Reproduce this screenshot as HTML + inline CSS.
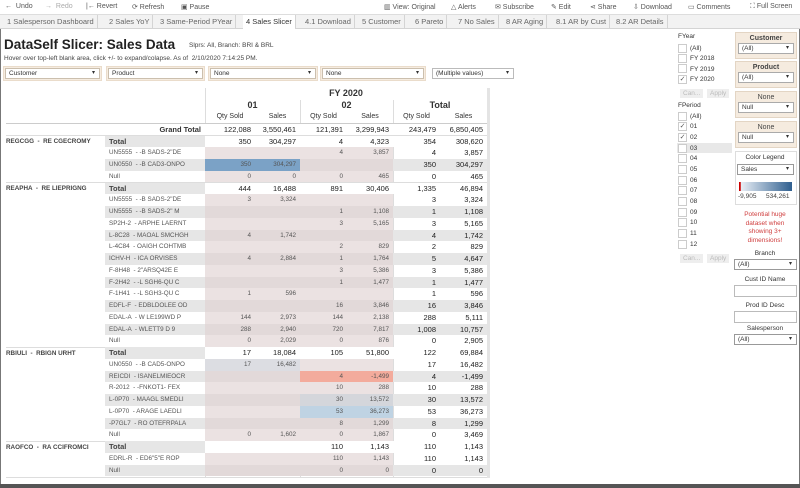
<!DOCTYPE html>
<html><head><meta charset="utf-8"><style>
*{box-sizing:border-box;margin:0;padding:0}
body{width:800px;height:488px;overflow:hidden;background:#fff;font-family:"Liberation Sans",sans-serif;color:#333;position:relative}
.abs{position:absolute}
.tb{position:absolute;top:0;left:0;width:800px;height:15px;background:#fff;font-size:7px;color:#555;border-bottom:1px solid #ddd}
.tb span{position:absolute;top:3px}
.tabs{position:absolute;top:15px;left:0;width:800px;height:14px;background:#f2f2f2;border-bottom:1px solid #d4d4d4;font-size:7.5px;color:#666}
.tabs span{position:absolute;top:0;height:14px;line-height:14px;padding:0 3px;border-right:1px solid #d4d4d4}
.tabs .on{background:#fff;color:#333}
.dd{position:absolute;height:11px;border:1px solid #cbbfae;background:#fff;font-size:6.5px;line-height:9px;padding-left:3px;color:#333}
.dd:after{content:"▾";position:absolute;right:4px;top:0;font-size:6px}
.ddw{position:absolute;height:15px;background:#f6ece0;border:1px solid #eadccb}
.r{position:absolute;left:0;width:487px;height:11.75px;font-size:6.3px;color:#555}
.r span{position:absolute;top:0;height:11.75px;line-height:11.75px;text-align:right;padding-right:4px}
.r .l{left:105px;width:100px;text-align:left;padding-left:4px}
.r .a{left:205px;width:50px}.r .b{left:255px;width:45px}
.r .c{left:300px;width:47px}.r .d{left:347px;width:46px}
.r .e{left:393px;width:47px;font-size:7.5px;color:#222}.r .f{left:440px;width:47px;font-size:7.5px;color:#222}
.r .a,.r .b,.r .c,.r .d{background:#ebe2e2}
.r.g .l,.r.g .e,.r.g .f{background:#e6e6e6}
.r.g .a,.r.g .b,.r.g .c,.r.g .d{background:#e2d9d9}
.r.t .l{background:#e6e6e6;font-weight:bold;color:#444}
.r.t span{font-size:7.5px;color:#222}
.r.t .a,.r.t .b,.r.t .c,.r.t .d,.r.t .e,.r.t .f{background:#fff}
.grp{position:absolute;left:6px;font-size:6.3px;color:#444;font-weight:bold}
.hl{position:absolute;left:6px;width:481px;height:1px;background:#ddd}
.vl{position:absolute;width:1px;background:#ddd}
.cb{position:absolute;left:678px;width:9px;height:9px;border:1px solid #ccc;background:#fff}
.ck{font-size:7px;line-height:7px;text-align:center;color:#555}
.ft{position:absolute;left:690px;font-size:6.5px;color:#333}
.card{position:absolute;left:735px;width:62px;background:#f5ebdf;border:1px solid #e3d5c4}
.card .h{font-size:7px;font-weight:bold;text-align:center;color:#444;margin-top:2px}
.card .dd{position:relative;margin:1px 2px;width:56px;border-color:#aaa;font-size:6.5px}
.lab{position:absolute;font-size:6.5px;color:#333;text-align:center;width:64px;left:733px}
.btn{position:absolute;font-size:6.5px;color:#bbb;background:#eee;padding:1px 3px}
</style></head><body>
<div class="tb">
<span style="left:5px">←&nbsp; Undo</span><span style="left:45px;color:#aaa">→&nbsp; Redo</span><span style="left:86px">|← Revert</span><span style="left:132px">⟳ Refresh</span><span style="left:181px">▣ Pause</span>
<span style="left:384px">▥ View: Original</span><span style="left:451px">△ Alerts</span><span style="left:495px">✉ Subscribe</span><span style="left:551px">✎ Edit</span><span style="left:590px">⋖ Share</span><span style="left:633px">⇩ Download</span><span style="left:688px">▭ Comments</span><span style="left:750px">⛶ Full Screen</span>
</div>
<div class="tabs">
<span style="left:4px">1 Salesperson Dashboard</span><span style="left:106px">2 Sales YoY</span><span style="left:157px">3 Same-Period PYear</span><span class="on" style="left:243px">4 Sales Slicer</span><span style="left:302px">4.1 Download</span><span style="left:359px">5 Customer</span><span style="left:412px">6 Pareto</span><span style="left:455px">7 No Sales</span><span style="left:503px">8 AR Aging</span><span style="left:553px">8.1 AR by Cust</span><span style="left:613px">8.2 AR Details</span>
</div>
<div class="abs" style="left:4px;top:37px;font-size:13.5px;font-weight:bold;color:#222">DataSelf Slicer: Sales Data</div>
<div class="abs" style="left:189px;top:42px;font-size:6.5px;color:#444">Slprs: All, Branch: BRI &amp; BRL</div>
<div class="abs" style="left:4px;top:55px;font-size:6.5px;color:#444">Hover over top-left blank area, click +/- to expand/colapse. As of &nbsp;2/10/2020 7:14:25 PM.</div>
<div class="ddw" style="left:3px;top:66px;width:99px"></div><div class="dd" style="left:5px;top:68px;width:95px">Customer</div>
<div class="ddw" style="left:106px;top:66px;width:99px"></div><div class="dd" style="left:108px;top:68px;width:95px">Product</div>
<div class="ddw" style="left:208px;top:66px;width:110px"></div><div class="dd" style="left:210px;top:68px;width:106px">None</div>
<div class="ddw" style="left:320px;top:66px;width:106px"></div><div class="dd" style="left:322px;top:68px;width:102px">None</div>
<div class="dd" style="left:432px;top:68px;width:82px;border-color:#bbb">(Multiple values)</div>

<div class="vl" style="left:205px;top:88px;height:390px"></div>
<div class="vl" style="left:300px;top:100px;height:378px"></div>
<div class="vl" style="left:393px;top:100px;height:378px"></div>
<div class="abs" style="left:487px;top:88px;width:3px;height:390px;background:#e4e4e4"></div>
<div class="abs" style="left:205px;top:88px;width:282px;text-align:center;font-size:9px;font-weight:bold;color:#333">FY 2020</div>
<div class="abs" style="left:205px;top:100px;width:95px;text-align:center;font-size:9px;font-weight:bold">01</div>
<div class="abs" style="left:300px;top:100px;width:93px;text-align:center;font-size:9px;font-weight:bold">02</div>
<div class="abs" style="left:393px;top:100px;width:94px;text-align:center;font-size:9px;font-weight:bold">Total</div>
<div class="abs" style="left:205px;top:113px;width:50px;text-align:center;font-size:7px">Qty Sold</div>
<div class="abs" style="left:255px;top:113px;width:45px;text-align:center;font-size:7px">Sales</div>
<div class="abs" style="left:300px;top:113px;width:47px;text-align:center;font-size:7px">Qty Sold</div>
<div class="abs" style="left:347px;top:113px;width:46px;text-align:center;font-size:7px">Sales</div>
<div class="abs" style="left:393px;top:113px;width:47px;text-align:center;font-size:7px">Qty Sold</div>
<div class="abs" style="left:440px;top:113px;width:47px;text-align:center;font-size:7px">Sales</div>
<div class="hl" style="top:123px;background:#ccc"></div>
<div class="r t" style="top:123.5px"><span style="left:105px;width:100px;font-weight:bold;color:#333">Grand Total</span><span class="a">122,088</span><span class="b">3,550,461</span><span class="c">121,391</span><span class="d">3,299,943</span><span class="e">243,479</span><span class="f">6,850,405</span></div>

<div class="hl" style="top:135px"></div>
<div class="grp" style="top:138px">REGCGG &nbsp;- &nbsp;RE CGECROMY</div>
<div class="r t" style="top:135.5px"><span class="l">Total</span><span class="a">350</span><span class="b">304,297</span><span class="c">4</span><span class="d">4,323</span><span class="e">354</span><span class="f">308,620</span></div>
<div class="r" style="top:147.25px"><span class="l">UN5555 &nbsp;- -B SADS-2"DE</span><span class="a"></span><span class="b"></span><span class="c">4</span><span class="d">3,857</span><span class="e">4</span><span class="f">3,857</span></div>
<div class="r g" style="top:159px"><span class="l">UN0550 &nbsp;- -B CAD3-ONPO</span><span class="a" style="background:#7ba2c6">350</span><span class="b" style="background:#7ba2c6">304,297</span><span class="c"></span><span class="d"></span><span class="e">350</span><span class="f">304,297</span></div>
<div class="r" style="top:170.75px"><span class="l">Null</span><span class="a">0</span><span class="b">0</span><span class="c">0</span><span class="d">465</span><span class="e">0</span><span class="f">465</span></div>

<div class="hl" style="top:182px"></div>
<div class="grp" style="top:185px">REAPHA &nbsp;- &nbsp;RE LIEPRIGNG</div>
<div class="r t" style="top:182.5px"><span class="l">Total</span><span class="a">444</span><span class="b">16,488</span><span class="c">891</span><span class="d">30,406</span><span class="e">1,335</span><span class="f">46,894</span></div>
<div class="r" style="top:194.25px"><span class="l">UN5555 &nbsp;- -B SADS-2"DE</span><span class="a">3</span><span class="b">3,324</span><span class="c"></span><span class="d"></span><span class="e">3</span><span class="f">3,324</span></div>
<div class="r g" style="top:206px"><span class="l">UN5555 &nbsp;- -B SADS-2" M</span><span class="a"></span><span class="b"></span><span class="c">1</span><span class="d">1,108</span><span class="e">1</span><span class="f">1,108</span></div>
<div class="r" style="top:217.75px"><span class="l">SP2H-2 &nbsp;- ARPHE LAERNT</span><span class="a"></span><span class="b"></span><span class="c">3</span><span class="d">5,165</span><span class="e">3</span><span class="f">5,165</span></div>
<div class="r g" style="top:229.5px"><span class="l">L-8C28 &nbsp;- MAOAL SMCHGH</span><span class="a">4</span><span class="b">1,742</span><span class="c"></span><span class="d"></span><span class="e">4</span><span class="f">1,742</span></div>
<div class="r" style="top:241.25px"><span class="l">L-4C84 &nbsp;- OAIGH COHTMB</span><span class="a"></span><span class="b"></span><span class="c">2</span><span class="d">829</span><span class="e">2</span><span class="f">829</span></div>
<div class="r g" style="top:253px"><span class="l">ICHV-H &nbsp;- ICA ORVISES</span><span class="a">4</span><span class="b">2,884</span><span class="c">1</span><span class="d">1,764</span><span class="e">5</span><span class="f">4,647</span></div>
<div class="r" style="top:264.75px"><span class="l">F-8H48 &nbsp;- 2"ARSQ42E E</span><span class="a"></span><span class="b"></span><span class="c">3</span><span class="d">5,386</span><span class="e">3</span><span class="f">5,386</span></div>
<div class="r g" style="top:276.5px"><span class="l">F-2H42 &nbsp;- -L SGH6-QU C</span><span class="a"></span><span class="b"></span><span class="c">1</span><span class="d">1,477</span><span class="e">1</span><span class="f">1,477</span></div>
<div class="r" style="top:288.25px"><span class="l">F-1H41 &nbsp;- -L SGH3-QU C</span><span class="a">1</span><span class="b">596</span><span class="c"></span><span class="d"></span><span class="e">1</span><span class="f">596</span></div>
<div class="r g" style="top:300px"><span class="l">EDFL-F &nbsp;- EDBLDOLEE OD</span><span class="a"></span><span class="b"></span><span class="c">16</span><span class="d">3,846</span><span class="e">16</span><span class="f">3,846</span></div>
<div class="r" style="top:311.75px"><span class="l">EDAL-A &nbsp;- W LE199WD P</span><span class="a">144</span><span class="b">2,973</span><span class="c">144</span><span class="d">2,138</span><span class="e">288</span><span class="f">5,111</span></div>
<div class="r g" style="top:323.5px"><span class="l">EDAL-A &nbsp;- WLETT9 D 9</span><span class="a">288</span><span class="b">2,940</span><span class="c">720</span><span class="d">7,817</span><span class="e">1,008</span><span class="f">10,757</span></div>
<div class="r" style="top:335.25px"><span class="l">Null</span><span class="a">0</span><span class="b">2,029</span><span class="c">0</span><span class="d">876</span><span class="e">0</span><span class="f">2,905</span></div>

<div class="hl" style="top:346.5px"></div>
<div class="grp" style="top:349.5px">RBIULI &nbsp;- &nbsp;RBIGN URHT</div>
<div class="r t" style="top:347px"><span class="l">Total</span><span class="a">17</span><span class="b">18,084</span><span class="c">105</span><span class="d">51,800</span><span class="e">122</span><span class="f">69,884</span></div>
<div class="r" style="top:358.75px"><span class="l">UN0550 &nbsp;- -B CAD5-ONPO</span><span class="a" style="background:#dcdde2">17</span><span class="b" style="background:#dcdde2">16,482</span><span class="c"></span><span class="d"></span><span class="e">17</span><span class="f">16,482</span></div>
<div class="r g" style="top:370.5px"><span class="l">REICDI &nbsp;- ISANELMIEOCR</span><span class="a"></span><span class="b"></span><span class="c" style="background:#f3ab9c">4</span><span class="d" style="background:#f3ab9c">-1,499</span><span class="e">4</span><span class="f">-1,499</span></div>
<div class="r" style="top:382.25px"><span class="l">R-2012 &nbsp;- -FNKOT1- FEX</span><span class="a"></span><span class="b"></span><span class="c">10</span><span class="d">288</span><span class="e">10</span><span class="f">288</span></div>
<div class="r g" style="top:394px"><span class="l">L-0P70 &nbsp;- MAAGL SMEDLI</span><span class="a"></span><span class="b"></span><span class="c" style="background:#d4d6db">30</span><span class="d" style="background:#d4d6db">13,572</span><span class="e">30</span><span class="f">13,572</span></div>
<div class="r" style="top:405.75px"><span class="l">L-0P70 &nbsp;- ARAGE LAEDLI</span><span class="a"></span><span class="b"></span><span class="c" style="background:#bfd3e3">53</span><span class="d" style="background:#bfd3e3">36,273</span><span class="e">53</span><span class="f">36,273</span></div>
<div class="r g" style="top:417.5px"><span class="l">-P7GL7 &nbsp;- RO OTEFRPALA</span><span class="a"></span><span class="b"></span><span class="c">8</span><span class="d">1,299</span><span class="e">8</span><span class="f">1,299</span></div>
<div class="r" style="top:429.25px"><span class="l">Null</span><span class="a">0</span><span class="b">1,602</span><span class="c">0</span><span class="d">1,867</span><span class="e">0</span><span class="f">3,469</span></div>

<div class="hl" style="top:440.5px"></div>
<div class="grp" style="top:443.5px">RAOFCO &nbsp;- &nbsp;RA CCIFROMCI</div>
<div class="r t" style="top:441px"><span class="l">Total</span><span class="a"></span><span class="b"></span><span class="c">110</span><span class="d">1,143</span><span class="e">110</span><span class="f">1,143</span></div>
<div class="r" style="top:452.75px"><span class="l">EDRL-R &nbsp;- ED6"5"E ROP</span><span class="a"></span><span class="b"></span><span class="c">110</span><span class="d">1,143</span><span class="e">110</span><span class="f">1,143</span></div>
<div class="r g" style="top:464.5px"><span class="l">Null</span><span class="a"></span><span class="b"></span><span class="c">0</span><span class="d">0</span><span class="e">0</span><span class="f">0</span></div>
<div class="hl" style="top:476.5px"></div>
<div class="abs" style="left:0;top:484px;width:800px;height:4px;background:#555"></div>
<div class="abs" style="left:0;top:29px;width:1px;height:455px;background:#777"></div>
<div class="abs" style="left:799px;top:29px;width:1px;height:455px;background:#777"></div>

<!-- FYear -->
<div class="ft" style="left:678px;top:33px">FYear</div>
<div class="cb" style="top:44px"></div><div class="ft" style="top:45px">(All)</div>
<div class="cb" style="top:54px"></div><div class="ft" style="top:55px">FY 2018</div>
<div class="cb" style="top:64px"></div><div class="ft" style="top:66px">FY 2019</div>
<div class="cb ck" style="top:75px">✓</div><div class="ft" style="top:76px">FY 2020</div>
<div class="btn" style="left:680px;top:89px">Can...</div><div class="btn" style="left:707px;top:89px">Apply</div>
<div class="ft" style="left:678px;top:102px">FPeriod</div>
<div class="cb" style="top:112px"></div><div class="ft" style="top:113px">(All)</div>
<div class="cb ck" style="top:122px">✓</div><div class="ft" style="top:123px">01</div>
<div class="cb ck" style="top:133px">✓</div><div class="ft" style="top:134px">02</div>
<div class="abs" style="left:677px;top:143px;width:55px;height:10px;background:#e8e8e8"></div>
<div class="cb" style="top:143.5px"></div><div class="ft" style="top:144.5px">03</div>
<div class="cb" style="top:154px"></div><div class="ft" style="top:155px">04</div>
<div class="cb" style="top:165px"></div><div class="ft" style="top:166px">05</div>
<div class="cb" style="top:175.5px"></div><div class="ft" style="top:176.5px">06</div>
<div class="cb" style="top:186px"></div><div class="ft" style="top:187px">07</div>
<div class="cb" style="top:197px"></div><div class="ft" style="top:198px">08</div>
<div class="cb" style="top:207.5px"></div><div class="ft" style="top:208.5px">09</div>
<div class="cb" style="top:218px"></div><div class="ft" style="top:219px">10</div>
<div class="cb" style="top:229px"></div><div class="ft" style="top:230px">11</div>
<div class="cb" style="top:239.5px"></div><div class="ft" style="top:240.5px">12</div>
<div class="btn" style="left:680px;top:254px">Can...</div><div class="btn" style="left:707px;top:254px">Apply</div>

<!-- cards -->
<div class="card" style="top:32px;height:27px"><div class="h">Customer</div><div class="dd">(All)</div></div>
<div class="card" style="top:61px;height:27px"><div class="h">Product</div><div class="dd">(All)</div></div>
<div class="card" style="top:91px;height:27px"><div class="h" style="font-weight:normal">None</div><div class="dd">Null</div></div>
<div class="card" style="top:121px;height:27px"><div class="h" style="font-weight:normal">None</div><div class="dd">Null</div></div>
<div class="abs" style="left:735px;top:151px;width:62px;height:54px;border:1px solid #ddd;background:#fff"></div>
<div class="lab" style="top:154px">Color Legend</div>
<div class="dd" style="left:737px;top:164px;width:57px;border-color:#999">Sales</div>
<div class="abs" style="left:739px;top:182px;width:53px;height:9px;background:linear-gradient(to right,#c00 0,#c00 1.5px,#e8eef5 2px,#2f5f8f)"></div>
<div class="abs" style="left:738px;top:193px;font-size:6.5px;color:#444">-9,905</div>
<div class="abs" style="left:766px;top:193px;font-size:6.5px;color:#444">534,261</div>
<div class="lab" style="top:211px;color:#d04040;line-height:8.5px">Potential huge<br>dataset when<br>showing 3+<br>dimensions!</div>
<div class="lab" style="top:250px">Branch</div>
<div class="dd" style="left:734px;top:259px;width:63px;border-color:#999">(All)</div>
<div class="lab" style="top:276px">Cust ID Name</div>
<div class="abs" style="left:734px;top:285px;width:63px;height:12px;border:1px solid #bbb"></div>
<div class="lab" style="top:302px">Prod ID Desc</div>
<div class="abs" style="left:734px;top:311px;width:63px;height:12px;border:1px solid #bbb"></div>
<div class="lab" style="top:325px">Salesperson</div>
<div class="dd" style="left:734px;top:334px;width:63px;border-color:#999">(All)</div>
</body></html>
